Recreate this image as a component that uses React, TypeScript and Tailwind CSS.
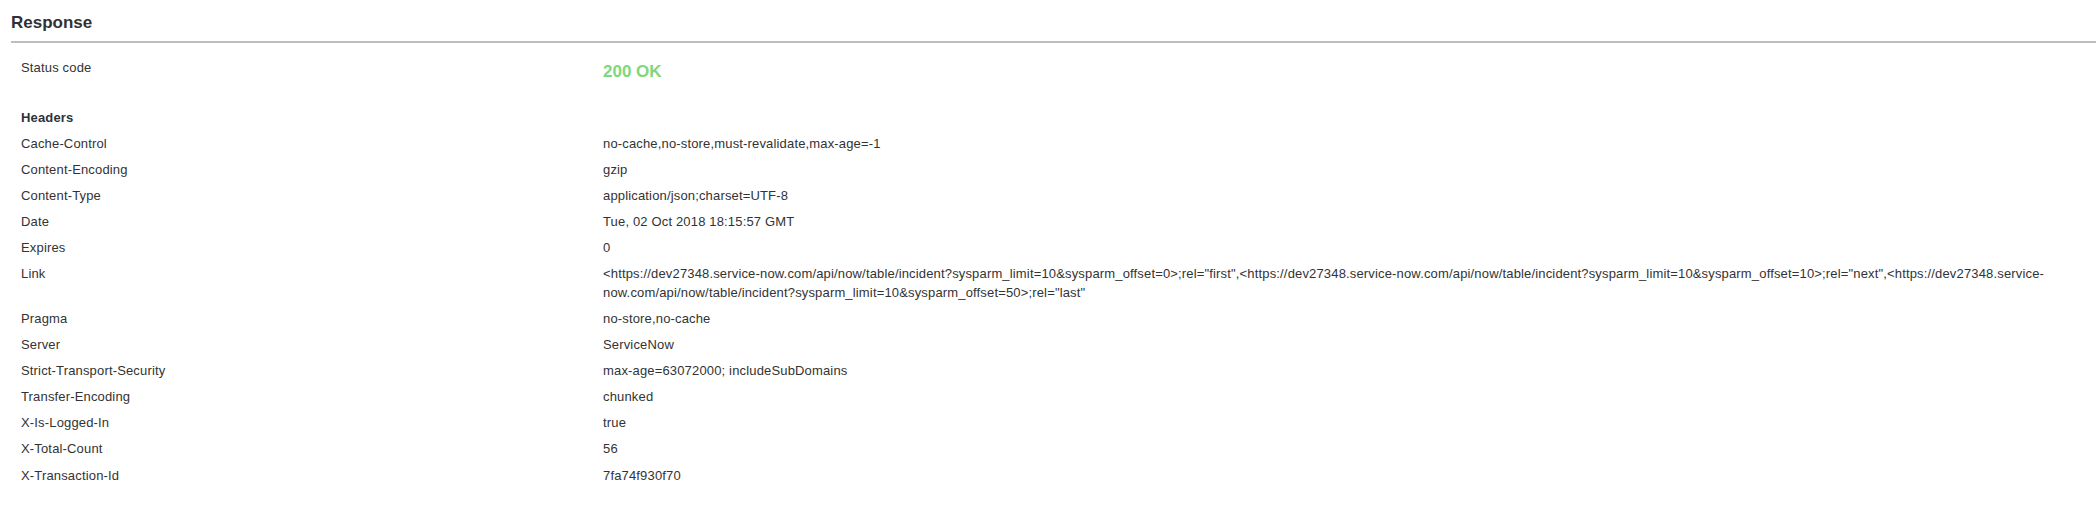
import React from "react";

type Header = { name: string; value: React.ReactNode };

const headers: Header[] = [
    { name: "Cache-Control", value: "no-cache,no-store,must-revalidate,max-age=-1" },
    { name: "Content-Encoding", value: "gzip" },
    { name: "Content-Type", value: "application/json;charset=UTF-8" },
    { name: "Date", value: "Tue, 02 Oct 2018 18:15:57 GMT" },
    { name: "Expires", value: "0" },
    {
        name: "Link",
        value: (
            <>
                {'<https://dev27348.service-now.com/api/now/table/incident?sysparm_limit=10&sysparm_offset=0>;rel="first",<https://dev27348.service-now.com/api/now/table/incident?sysparm_limit=10&sysparm_offset=10>;rel="next",<https://dev27348.service-'}
                <br />
                {'now.com/api/now/table/incident?sysparm_limit=10&sysparm_offset=50>;rel="last"'}
            </>
        ),
    },
    { name: "Pragma", value: "no-store,no-cache" },
    { name: "Server", value: "ServiceNow" },
    { name: "Strict-Transport-Security", value: "max-age=63072000; includeSubDomains" },
    { name: "Transfer-Encoding", value: "chunked" },
    { name: "X-Is-Logged-In", value: "true" },
    { name: "X-Total-Count", value: "56" },
    { name: "X-Transaction-Id", value: "7fa74f930f70" },
];

export default function App() {
    return (
        <div
            className="w-[2096px] h-[510px] bg-white pl-[11px] text-[#333] overflow-hidden"
            style={{ fontFamily: '"Liberation Sans", Arial, sans-serif' }}
        >
            <div className="pt-[13px] pb-[8px] border-b-2 border-[#bebebe]">
                <h3 className="text-[17px] leading-[20px] font-bold text-[#2f3237]">Response</h3>
            </div>

            <div className="grid grid-cols-[582px_1fr] items-start pt-[16px] mb-[21px]">
                <div className="px-[10px] text-[13px] leading-[18.5px] tracking-[0.16px]">Status code</div>
                <div className="px-[10px] text-[17px] leading-[25px] font-bold text-[#7dd87d]">200 OK</div>
            </div>

            <div className="grid grid-cols-[582px_1fr] text-[13px] leading-[18.5px] tracking-[0.16px]">
                <div className="px-[10px] py-[3.8px] font-bold text-[#2f3237]">Headers</div>
                <div className="px-[10px] py-[3.8px]" />
                {headers.map((h, index) => (
                    <React.Fragment key={index}>
                        <div className="px-[10px] py-[3.8px]">{h.name}</div>
                        <div className="px-[10px] py-[3.8px] whitespace-nowrap">{h.value}</div>
                    </React.Fragment>
                ))}
            </div>
        </div>
    );
}
